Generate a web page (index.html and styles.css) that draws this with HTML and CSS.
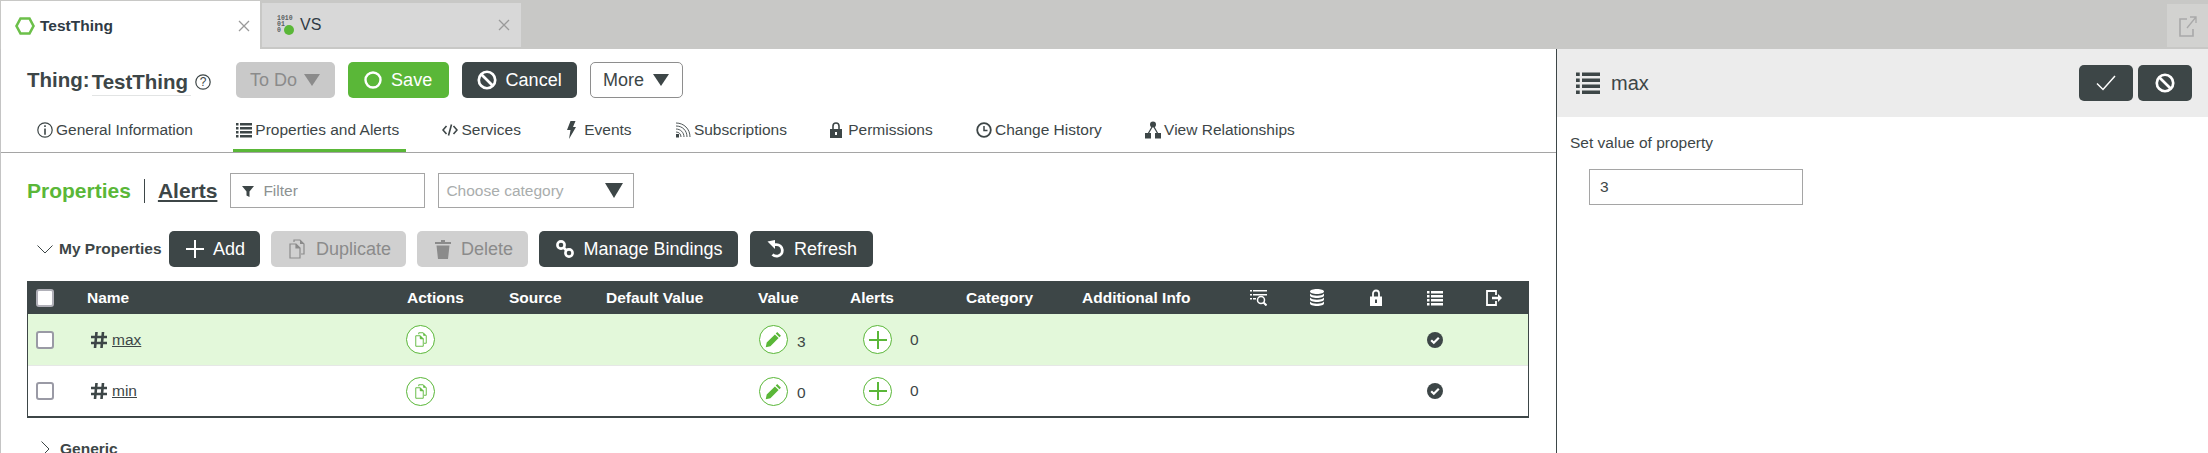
FILE: index.html
```html
<!DOCTYPE html>
<html lang="en">
<head>
<meta charset="utf-8">
<title>TestThing</title>
<link rel="stylesheet" href="styles.css">
</head>
<body>
<svg class="defs" width="0" height="0" aria-hidden="true">
  <symbol id="i-list" viewBox="0 0 16 16"><path fill="currentColor" d="M0 1h2.500v2.400H0zM4 1h12v2.400H4zM0 5h2.500v2.400H0zM4 5h12v2.400H4zM0 9h2.500v2.400H0zM4 9h12v2.400H4zM0 13h2.500v2.400H0zM4 13h12v2.400H4z"/></symbol>
  <symbol id="i-ban" viewBox="0 0 18 18"><circle cx="9" cy="9" r="7.400" fill="none" stroke="currentColor" stroke-width="2.400"/><path d="M4 4l10 10" stroke="currentColor" stroke-width="2.400"/></symbol>
  <symbol id="i-caret" viewBox="0 0 16 12"><path fill="currentColor" d="M0 0h16L8 12z"/></symbol>
  <symbol id="i-copy" viewBox="0 0 16 20"><path fill="none" stroke="currentColor" stroke-width="1.200" d="M5 3V1h6l4 4v10h-3M1 5h6l4 4v10H1zM7 5v4h4"/><path fill="currentColor" d="M11 1l4 4h-4zM7 5l4 4H7z"/></symbol>
  <symbol id="i-pencil" viewBox="0 0 16 16"><path fill="currentColor" d="M11.500 1l3.500 3.500-1.400 1.400-3.500-3.500zM9.300 3.200l3.500 3.500-7.700 7.700L.7 15.300l.9-4.400z"/></symbol>
  <symbol id="i-plus" viewBox="0 0 18 18"><path fill="none" stroke="currentColor" stroke-width="2" d="M9 0v18M0 9h18"/></symbol>
  <symbol id="i-check" viewBox="0 0 16 16"><circle cx="8" cy="8" r="8" fill="currentColor"/><path fill="none" stroke="#fff" stroke-width="2.200" d="M4.200 8.200l2.600 2.500 5-5"/></symbol>
  <symbol id="i-hash" viewBox="0 0 16 18"><path fill="none" stroke="currentColor" stroke-width="2.600" d="M5.500 1L4 17M12 1l-1.500 16M0 6h16M0 12h16"/></symbol>
</svg>

<header class="tabstrip">
  <div class="tab tab-active">
    <svg class="tab-icon" viewBox="0 0 20 18" width="20" height="18"><path fill="none" stroke="#6cc04a" stroke-width="2.600" d="M5.500 1.500h9L18.500 9l-4 7.500h-9L1.500 9z"/></svg>
    <span class="tab-label tab-label-bold">TestThing</span>
    <svg class="tab-close" viewBox="0 0 12 12" width="12" height="12"><path stroke="#9a9a9a" stroke-width="1.300" d="M1 1l10 10M11 1L1 11"/></svg>
  </div>
  <div class="tab tab-off">
    <svg class="tab-icon-vs" viewBox="0 0 18 20" width="18" height="20"><text class="bits" x="0" y="5">1010</text><text class="bits" x="0" y="11">01</text><text class="bits" x="0" y="17">0</text><circle cx="12" cy="15" r="5" fill="#5ab738"/></svg>
    <span class="tab-label">VS</span>
    <svg class="tab-close" viewBox="0 0 12 12" width="12" height="12"><path stroke="#9a9a9a" stroke-width="1.300" d="M1 1l10 10M11 1L1 11"/></svg>
  </div>
  <div class="popout">
    <svg viewBox="0 0 18 22" width="18" height="22"><path fill="none" stroke="#a9a9a9" stroke-width="1.600" d="M8 4H1v17h13v-7"/><path fill="none" stroke="#a9a9a9" stroke-width="1.300" d="M8 13L17 2M11 2h6v6"/></svg>
  </div>
</header>

<div class="workspace">
  <main class="content">
    <div class="titlebar">
      <h1 class="title"><span>Thing:</span><span class="title-name">TestThing</span></h1>
      <svg class="help" viewBox="0 0 16 16" width="16" height="16"><circle cx="8" cy="8" r="7.200" fill="none" stroke="#3d4647" stroke-width="1.200"/><text class="help-q" x="8" y="12">?</text></svg>
      <button class="btn btn-disabled btn-todo">To Do<svg class="caret" width="16" height="12"><use href="#i-caret"/></svg></button>
      <button class="btn btn-green btn-save"><svg viewBox="0 0 18 18" width="18" height="18"><circle cx="9" cy="9" r="7.500" fill="none" stroke="#fff" stroke-width="2.400"/></svg>Save</button>
      <button class="btn btn-dark btn-cancel"><svg width="20" height="20"><use href="#i-ban"/></svg>Cancel</button>
      <button class="btn btn-outline btn-more">More<svg class="caret" width="16" height="12"><use href="#i-caret"/></svg></button>
    </div>

    <nav class="subnav">
      <a class="nav-item"><svg viewBox="0 0 16 16" width="16" height="16"><circle cx="8" cy="8" r="7.200" fill="none" stroke="currentColor" stroke-width="1.200"/><path fill="currentColor" d="M7.200 3.300h1.600v1.700H7.200zM7.200 6.500h1.600v6.200H7.200z"/></svg>General Information</a>
      <a class="nav-item nav-active"><svg width="16" height="16"><use href="#i-list"/></svg>Properties and Alerts</a>
      <a class="nav-item"><svg viewBox="0 0 16 16" width="16" height="16"><path fill="none" stroke="currentColor" stroke-width="1.600" d="M4.500 4L1 8l3.500 4M11.500 4L15 8l-3.500 4M9.500 2.500l-3 11"/></svg>Services</a>
      <a class="nav-item nav-events"><svg viewBox="0 0 9 18" width="9" height="18"><path fill="currentColor" d="M3.500 0h5L6 6h3L2 18l1.500-9H0z"/></svg>Events</a>
      <a class="nav-item"><svg viewBox="0 0 16 16" width="16" height="16"><path fill="none" stroke="currentColor" stroke-width=".9" d="M1 1c8 0 14 6 14 14M1 4c6.500 0 11 4.500 11 11M1 7c4.500 0 8 3.500 8 8M1 10c3 0 5 2 5 5"/><path fill="currentColor" d="M1 12h3v3.500H1z"/></svg>Subscriptions</a>
      <a class="nav-item nav-perm"><svg viewBox="0 0 12 18" width="12" height="18"><path fill="none" stroke="currentColor" stroke-width="1.600" d="M3 8V5a3 3 0 0 1 6 0v3"/><path fill="currentColor" fill-rule="evenodd" d="M0 8h12v9H0zM5 11v3h2v-3z"/></svg>Permissions</a>
      <a class="nav-item"><svg viewBox="0 0 16 16" width="16" height="16"><circle cx="8" cy="8" r="6.800" fill="none" stroke="currentColor" stroke-width="1.800"/><path fill="none" stroke="currentColor" stroke-width="1.500" d="M8 4v4.500h3.500"/></svg>Change History</a>
      <a class="nav-item"><svg viewBox="0 0 16 18" width="16" height="18"><circle cx="8" cy="3.500" r="3" fill="currentColor"/><path fill="none" stroke="currentColor" stroke-width="1.300" d="M7 6l-4 7M9 6l4 7"/><path fill="currentColor" d="M0 12h6v5.500H0zM10 12h6v5.500h-6z"/></svg>View Relationships</a>
    </nav>

    <div class="filterbar">
      <span class="seg seg-on">Properties</span>
      <span class="seg-divider"></span>
      <a class="seg seg-link">Alerts</a>
      <div class="field field-filter">
        <svg viewBox="0 0 12 12" width="12" height="12"><path fill="#3d4647" d="M0 1h12L7.500 6.500V12l-3-1.500v-4z"/></svg>
        <input class="field-input" placeholder="Filter">
      </div>
      <div class="field field-cat">
        <span class="field-ph">Choose category</span>
        <svg viewBox="0 0 18 15" width="18" height="15"><path fill="#3d4647" d="M0 0h18L9 15z"/></svg>
      </div>
    </div>

    <div class="groupbar">
      <svg class="chev" viewBox="0 0 16 9" width="16" height="9"><path fill="none" stroke="#3d4647" d="M.5.500L8 8l7.500-7.500"/></svg>
      <span class="group-name">My Properties</span>
      <button class="btn btn-dark btn-add"><svg width="18" height="18"><use href="#i-plus"/></svg>Add</button>
      <button class="btn btn-disabled btn-dup"><svg width="16" height="20"><use href="#i-copy"/></svg>Duplicate</button>
      <button class="btn btn-disabled btn-del"><svg viewBox="0 0 16 20" width="16" height="20"><path fill="currentColor" d="M6 1h4v2h6v2H0V3h6zM1.500 6.500h13L13 20H3z"/></svg>Delete</button>
      <button class="btn btn-dark btn-bind"><svg viewBox="0 0 18 18" width="18" height="18"><g fill="none" stroke="#fff" stroke-width="2.600"><circle cx="5" cy="5" r="3.600"/><circle cx="13" cy="13" r="3.600"/><path d="M7 7l4 4"/></g></svg>Manage Bindings</button>
      <button class="btn btn-dark btn-refresh"><svg viewBox="0 0 18 18" width="18" height="18"><path fill="none" stroke="#fff" stroke-width="2.800" d="M6 4.600h3.500a5.800 5.800 0 0 1 1.500 11.400 6 6 0 0 1-5.500-1.500"/><path fill="#fff" d="M8 0v9L.5 1.500z"/></svg>Refresh</button>
    </div>

    <div class="grid">
      <div class="row row-head">
        <span class="cell"><span class="check check-head"></span></span>
        <span class="cell">Name</span>
        <span class="cell">Actions</span>
        <span class="cell">Source</span>
        <span class="cell">Default Value</span>
        <span class="cell">Value</span>
        <span class="cell">Alerts</span>
        <span class="cell">Category</span>
        <span class="cell">Additional Info</span>
        <span class="cell"><svg viewBox="0 0 17 17" width="17" height="17"><path fill="#fff" d="M0 1h2v1.500H0zM3 1h14v1.500H3zM0 5h2v1.500H0zM3 5h14v1.500H3zM0 9h2v1.500H0zM3 9h3v1.500H3z"/><circle cx="11" cy="11" r="3.500" fill="none" stroke="#fff" stroke-width="1.500"/><path stroke="#fff" stroke-width="2" d="M13.500 13.500L16.500 16.500"/></svg></span>
        <span class="cell"><svg viewBox="0 0 14 17" width="14" height="17"><path fill="#fff" d="M7 0c4 0 7 1 7 2.500S11 5 7 5 0 4 0 2.500 3 0 7 0zM0 4.500C1 6 4 6.700 7 6.700S13 6 14 4.500v2C14 8 11 9 7 9S0 8 0 6.500zM0 8.500c1 1.500 4 2.200 7 2.200s6-.7 7-2.200v2c0 1.500-3 2.500-7 2.500s-7-1-7-2.500zM0 12.500c1 1.500 4 2.200 7 2.200s6-.7 7-2.200v2C14 16 11 17 7 17s-7-1-7-2.500z"/></svg></span>
        <span class="cell"><svg viewBox="0 0 12 17" width="12" height="17"><path fill="none" stroke="#fff" stroke-width="1.800" d="M3 8V4.500a3 3 0 0 1 6 0V8"/><path fill="#fff" fill-rule="evenodd" d="M0 7.500h12V17H0zM5 10.500v3.500h2v-3.500z"/></svg></span>
        <span class="cell cell-white"><svg width="16" height="16"><use href="#i-list"/></svg></span>
        <span class="cell"><svg viewBox="0 0 16 16" width="16" height="16"><path fill="none" stroke="#fff" stroke-width="1.800" d="M10 5V1H1v14h9v-4"/><path fill="#fff" d="M6 6.700h6V4l4 4-4 4V9.300H6z"/></svg></span>
      </div>

      <div class="row row-body row-sel">
        <span class="cell"><span class="check"></span></span>
        <span class="cell cell-name"><svg width="16" height="18"><use href="#i-hash"/></svg><a class="link">max</a></span>
        <span class="cell"><span class="round"><svg width="12" height="15"><use href="#i-copy"/></svg></span></span>
        <span class="cell"></span>
        <span class="cell"></span>
        <span class="cell cell-value"><span class="round"><svg width="17" height="17"><use href="#i-pencil"/></svg></span><span class="val">3</span></span>
        <span class="cell cell-alert"><span class="round round-plus"><svg width="18" height="18"><use href="#i-plus"/></svg></span><span class="num">0</span></span>
        <span class="cell"></span>
        <span class="cell"></span>
        <span class="cell"></span>
        <span class="cell"></span>
        <span class="cell"></span>
        <span class="cell cell-ok"><svg width="16" height="16"><use href="#i-check"/></svg></span>
        <span class="cell"></span>
      </div>

      <div class="row row-body row-last">
        <span class="cell"><span class="check"></span></span>
        <span class="cell cell-name"><svg width="16" height="18"><use href="#i-hash"/></svg><a class="link">min</a></span>
        <span class="cell"><span class="round"><svg width="12" height="15"><use href="#i-copy"/></svg></span></span>
        <span class="cell"></span>
        <span class="cell"></span>
        <span class="cell cell-value"><span class="round"><svg width="17" height="17"><use href="#i-pencil"/></svg></span><span class="val">0</span></span>
        <span class="cell cell-alert"><span class="round round-plus"><svg width="18" height="18"><use href="#i-plus"/></svg></span><span class="num">0</span></span>
        <span class="cell"></span>
        <span class="cell"></span>
        <span class="cell"></span>
        <span class="cell"></span>
        <span class="cell"></span>
        <span class="cell cell-ok"><svg width="16" height="16"><use href="#i-check"/></svg></span>
        <span class="cell"></span>
      </div>
    </div>

    <div class="group-closed">
      <svg viewBox="0 0 9 16" width="9" height="16"><path fill="none" stroke="#3d4647" d="M.5.500L8 8 .5 15.500"/></svg>
      <span class="group-name">Generic</span>
    </div>
  </main>

  <aside class="panel">
    <div class="panel-head">
      <svg class="panel-icon" width="24" height="24"><use href="#i-list"/></svg>
      <span class="panel-title">max</span>
      <button class="btn btn-dark btn-square"><svg viewBox="0 0 20 16" width="20" height="16"><path fill="none" stroke="#fff" stroke-width="1.500" d="M1 8.500l6 6L19 1"/></svg></button>
      <button class="btn btn-dark btn-square"><svg width="20" height="20"><use href="#i-ban"/></svg></button>
    </div>
    <div class="panel-body">
      <div class="panel-label">Set value of property</div>
      <input class="panel-input" value="3">
    </div>
  </aside>
</div>
</body>
</html>
```

FILE: styles.css
```css
* { box-sizing: border-box; }
html, body { margin: 0; height: 100%; }
body {
  height: 453px;
  overflow: hidden;
  background: #fff;
  color: #3d4647;
  font-family: "Liberation Sans", Arial, sans-serif;
  font-size: 15.500px;
}
.defs { position: absolute; }
svg { display: block; flex: none; }

/* Tab strip */
.tabstrip {
  display: flex;
  height: 49px;
  background: #c8c8c6;
}
.tab {
  display: flex;
  align-items: center;
}
.tab-active {
  width: 259px;
  height: 49px;
  margin: 1px 0 0 1px;
  padding: 0 10px 0 14px;
  background: #fff;
}
.tab-off {
  width: 259px;
  height: 44px;
  margin: 3px 0 0 2px;
  padding: 0 11px 0 15px;
  background: #d8d8d8;
}
.tab-label { flex: 1; margin-left: 5px; color: #2f3a45; font-size: 15.500px; }
.tab-off .tab-label { font-size: 16px; }
.tab-icon-vs { margin-right: 0; }
.bits { font: 700 6.500px "Liberation Mono", monospace; fill: #5a6162; }
.popout {
  margin: 4px 0 2px auto;
  width: 41px;
  height: 43px;
  display: flex;
  align-items: center;
  justify-content: center;
  background: #d2d2d0;
}
.tab-label-bold { font-weight: 700; }

/* Layout */
.workspace { display: flex; height: 404px; }
.content {
  width: 1556px;
  flex: none;
  border-left: 1px solid #c4c4c4;
}
.panel { flex: 1; border-left: 1px solid #3d4647; }

/* Buttons */
.btn {
  display: inline-flex;
  align-items: center;
  justify-content: center;
  gap: 9px;
  height: 36px;
  padding: 1px 0 0;
  border: 0;
  border-radius: 5px;
  font: 18px "Liberation Sans", Arial, sans-serif;
}
.btn svg { margin-top: -1px; }
.btn-dark { background: #3d4647; color: #fff; }
.btn-green { background: #5ab738; color: #fff; }
.btn-disabled { background: #d0d0d0; color: #8b8b8b; }
.btn-outline { background: #fff; color: #3d4647; border: 1px solid #8e8e8e; }

/* Title */
.titlebar {
  display: flex;
  align-items: center;
  height: 36px;
  margin-top: 13px;
  padding-left: 26px;
}
.title {
  display: flex;
  align-items: flex-start;
  margin: 0;
  font-size: 20.500px;
  font-weight: 700;
  line-height: 24px;
}
.title-name {
  width: 99px;
  margin: 2px 0 -3px 2px;
  padding-bottom: 1px;
  border-bottom: 1px solid #e2e4e4;
}
.help { margin: 3px 0 0 4px; }
.help-q { font-size: 12px; fill: #3d4647; text-anchor: middle; }
.btn-todo { width: 99px; margin-left: 25px; background: #c9c9c9; gap: 7px; }
.btn-save { width: 101px; margin-left: 13px; }
.btn-cancel { width: 115px; margin-left: 13px; }
.btn-more { width: 93px; margin-left: 13px; }

/* Sub navigation */
.subnav {
  display: flex;
  gap: 33.300px;
  height: 45px;
  margin-top: 10px;
  padding-left: 33px;
  border-bottom: 1px solid #a5a5a5;
}
.nav-item {
  display: flex;
  align-items: center;
  gap: 3px;
  height: 44px;
  padding: 0 7px 0 3px;
  color: #3d4647;
}
.nav-active { box-shadow: inset 0 -3px 0 #5ab738; }
.nav-events { margin-left: 3px; gap: 8px; }
.nav-perm { gap: 6px; }

/* Filter bar */
.filterbar {
  display: flex;
  align-items: center;
  height: 35px;
  margin-top: 20px;
  padding-left: 26px;
}
.seg { font-size: 21px; font-weight: 700; }
.seg-on { color: #5ab738; }
.seg-link { color: #3d4647; text-decoration: underline; }
.seg-divider { width: 1px; height: 24px; margin: 0 13px; background: #3d4647; }
.field {
  display: flex;
  align-items: center;
  height: 35px;
  border: 1px solid #a5a5a5;
  background: #fff;
}
.field-filter { width: 195px; margin-left: 13px; padding-left: 11px; gap: 9px; }
.field-cat { width: 196px; margin-left: 13px; padding: 0 10px 0 7px; justify-content: space-between; }
.field-input {
  flex: 1;
  min-width: 0;
  border: 0;
  padding: 0;
  outline: 0;
  font: 15.500px "Liberation Sans", Arial, sans-serif;
}
.field-input::placeholder { color: #8d9292; opacity: 1; }
.field-ph { color: #a9adad; }

/* Group toolbar */
.groupbar {
  display: flex;
  align-items: center;
  height: 36px;
  margin-top: 23px;
  padding-left: 36px;
}
.group-name { font-weight: 700; }
.groupbar .group-name { margin-left: 6px; white-space: nowrap; }
.btn-add { width: 91px; margin-left: 7px; padding-left: 3px; }
.btn-dup { width: 135px; margin-left: 11px; padding-left: 4px; gap: 11px; }
.btn-del { width: 111px; margin-left: 11px; padding-left: 4px; gap: 10px; }
.btn-bind { width: 199px; margin-left: 11px; padding-left: 3px; }
.btn-refresh { width: 123px; margin-left: 12px; padding-left: 2px; }

/* Property grid */
.grid {
  width: 1502px;
  margin: 14px 0 0 26px;
  border-left: 1px solid #3d4647;
  border-right: 1px solid #3d4647;
  border-bottom: 2px solid #3d4647;
}
.row {
  display: grid;
  grid-template-columns: 59px 320px 102px 97px 152px 92px 116px 116px 168px 60px 60px 57px 59px 1fr;
  align-items: center;
}
.row-head {
  height: 33px;
  margin: 0 -1px;
  padding-left: 1px;
  background: #3d4647;
  color: #fff;
  font-weight: 700;
}
.row-sel { height: 52px; background: #e3f8da; border-bottom: 1px solid #e6e8e6; }
.row-last { height: 50px; }
.cell { display: flex; align-items: center; white-space: nowrap; }
.cell-white { color: #fff; }
.check {
  display: block;
  width: 18px;
  height: 18px;
  margin-left: 8px;
  background: #fff;
  border: 2px solid #9a9aa5;
  border-radius: 3px;
}
.check-head { border-color: #b0b0b8; }
.cell-name { padding-left: 4px; gap: 5px; }
.link { text-decoration: underline; color: #3d4647; }
.round {
  display: flex;
  align-items: center;
  justify-content: center;
  width: 29px;
  height: 29px;
  margin-left: -1px;
  border: 1px solid #5ab738;
  border-radius: 50%;
  background: #fff;
  color: #5ab738;
}
.cell-value { padding-left: 2px; gap: 9px; }
.val { padding-top: 4px; }
.cell-alert { padding-left: 14px; gap: 18px; }
.cell-ok { color: #3d4647; }

/* Closed group */
.group-closed {
  display: flex;
  align-items: center;
  gap: 10px;
  height: 20px;
  margin-top: 21px;
  padding-left: 40px;
}

/* Right panel */
.panel-head {
  display: flex;
  align-items: center;
  height: 68px;
  padding: 0 16px 0 19px;
  background: #ececec;
}
.panel-icon { color: #3d4647; }
.panel-title { flex: 1; margin-left: 11px; font-size: 20px; }
.btn-square { width: 54px; }
.btn-square + .btn-square { margin-left: 5px; }
.panel-body { padding: 17px 13px; }
.panel-label { height: 18px; line-height: 18px; }
.panel-input {
  display: block;
  width: 214px;
  height: 36px;
  margin: 17px 0 0 19px;
  padding: 0 10px;
  border: 1px solid #a5a5a5;
  outline: 0;
  color: #3d4647;
  font: 15.500px "Liberation Sans", Arial, sans-serif;
}
```
